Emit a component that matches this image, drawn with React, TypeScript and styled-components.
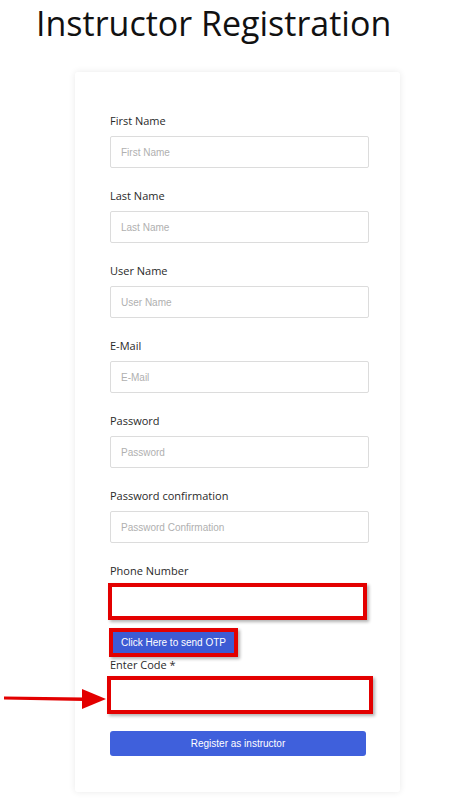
import React from 'react';
import styled, { createGlobalStyle } from 'styled-components';

const GlobalStyle = createGlobalStyle`
  body {
    margin: 0;
    background: #ffffff;
    font-family: "Open Sans", "Noto Sans", sans-serif;
  }
`;

const Page = styled.div`
  position: relative;
  width: 464px;
  min-height: 805px;
`;

const Title = styled.h1`
  margin: 0;
  padding: 0 0 0 36px;
  font-family: "Open Sans", sans-serif;
  font-size: 34px;
  font-weight: 400;
  line-height: 46px;
  color: #111;
`;

const Card = styled.div`
  margin: 26px 0 0 75px;
  width: 325px;
  box-sizing: border-box;
  padding: 41px 31px 36px 35px;
  background: #fff;
  border-radius: 3px;
  box-shadow: 0 0 7px rgba(0, 0, 0, 0.09);
  display: flex;
  flex-direction: column;
`;

const Field = styled.div`
  display: flex;
  flex-direction: column;
  margin-bottom: 20px;
`;

const Label = styled.label<{ $gap?: number }>`
  font-family: "Open Sans", sans-serif;
  font-size: 11px;
  line-height: 16px;
  color: #2a2a2a;
  margin-bottom: ${p => p.$gap ?? 7}px;
`;

const Input = styled.input`
  box-sizing: border-box;
  width: 259px;
  height: 32px;
  padding: 0 10px;
  border: 1px solid #dcdcdc;
  border-radius: 2px;
  font-family: "Liberation Sans", Arial, sans-serif;
  font-size: 10px;
  color: #333;
  outline: none;
  &::placeholder {
    color: #b0b0b0;
  }
`;

const Marked = styled.div<{ $w: number; $h: number; $shift?: number }>`
  box-sizing: border-box;
  width: ${p => p.$w}px;
  height: ${p => p.$h}px;
  margin-left: ${p => p.$shift ?? 0}px;
  border: 4px solid #e30000;
  background: #fff;
  box-shadow: 2px 2px 3px rgba(0, 0, 0, 0.3);
`;

const OtpFrame = styled(Marked)`
  display: flex;
  margin-top: 8px;
`;

const OtpButton = styled.button`
  flex: 1;
  border: none;
  margin: 0;
  padding: 0;
  background: #3d5bd4;
  color: #fff;
  font-family: "Liberation Sans", Arial, sans-serif;
  font-size: 10px;
  cursor: pointer;
`;

const RegisterButton = styled.button`
  margin-top: 17px;
  width: 256px;
  height: 25px;
  border: none;
  border-radius: 3px;
  background: #3f60dc;
  color: #fff;
  font-family: "Liberation Sans", Arial, sans-serif;
  font-size: 10px;
  cursor: pointer;
`;

const Arrow = styled.svg`
  position: absolute;
  left: 4px;
  top: 686px;
`;

const fields = [
  ['First Name', 'First Name'],
  ['Last Name', 'Last Name'],
  ['User Name', 'User Name'],
  ['E-Mail', 'E-Mail'],
  ['Password', 'Password'],
  ['Password confirmation', 'Password Confirmation'],
];

export default function App() {
  return (
    <Page>
      <GlobalStyle />
      <Title>Instructor Registration</Title>
      <Card>
        {fields.map(([label, ph]) => (
          <Field key={label}>
            <Label>{label}</Label>
            <Input placeholder={ph} type={label.startsWith('Password') ? 'password' : 'text'} />
          </Field>
        ))}
        <Label $gap={4}>Phone Number</Label>
        <Marked $w={259} $h={37} $shift={-2} />
        <OtpFrame $w={129} $h={29} $shift={-1}>
          <OtpButton>Click Here to send OTP</OtpButton>
        </OtpFrame>
        <Label $gap={3}>Enter Code *</Label>
        <Marked $w={266} $h={38} $shift={-3} />
        <RegisterButton>Register as instructor</RegisterButton>
      </Card>
      <Arrow width="104" height="26" viewBox="0 0 104 26">
        <path d="M0 10.5 L80 11.5 L80 15 L0 13.5 Z" fill="#e30000" />
        <path d="M78 3 L102 13 L78 23 Z" fill="#e30000" />
      </Arrow>
    </Page>
  );
}
